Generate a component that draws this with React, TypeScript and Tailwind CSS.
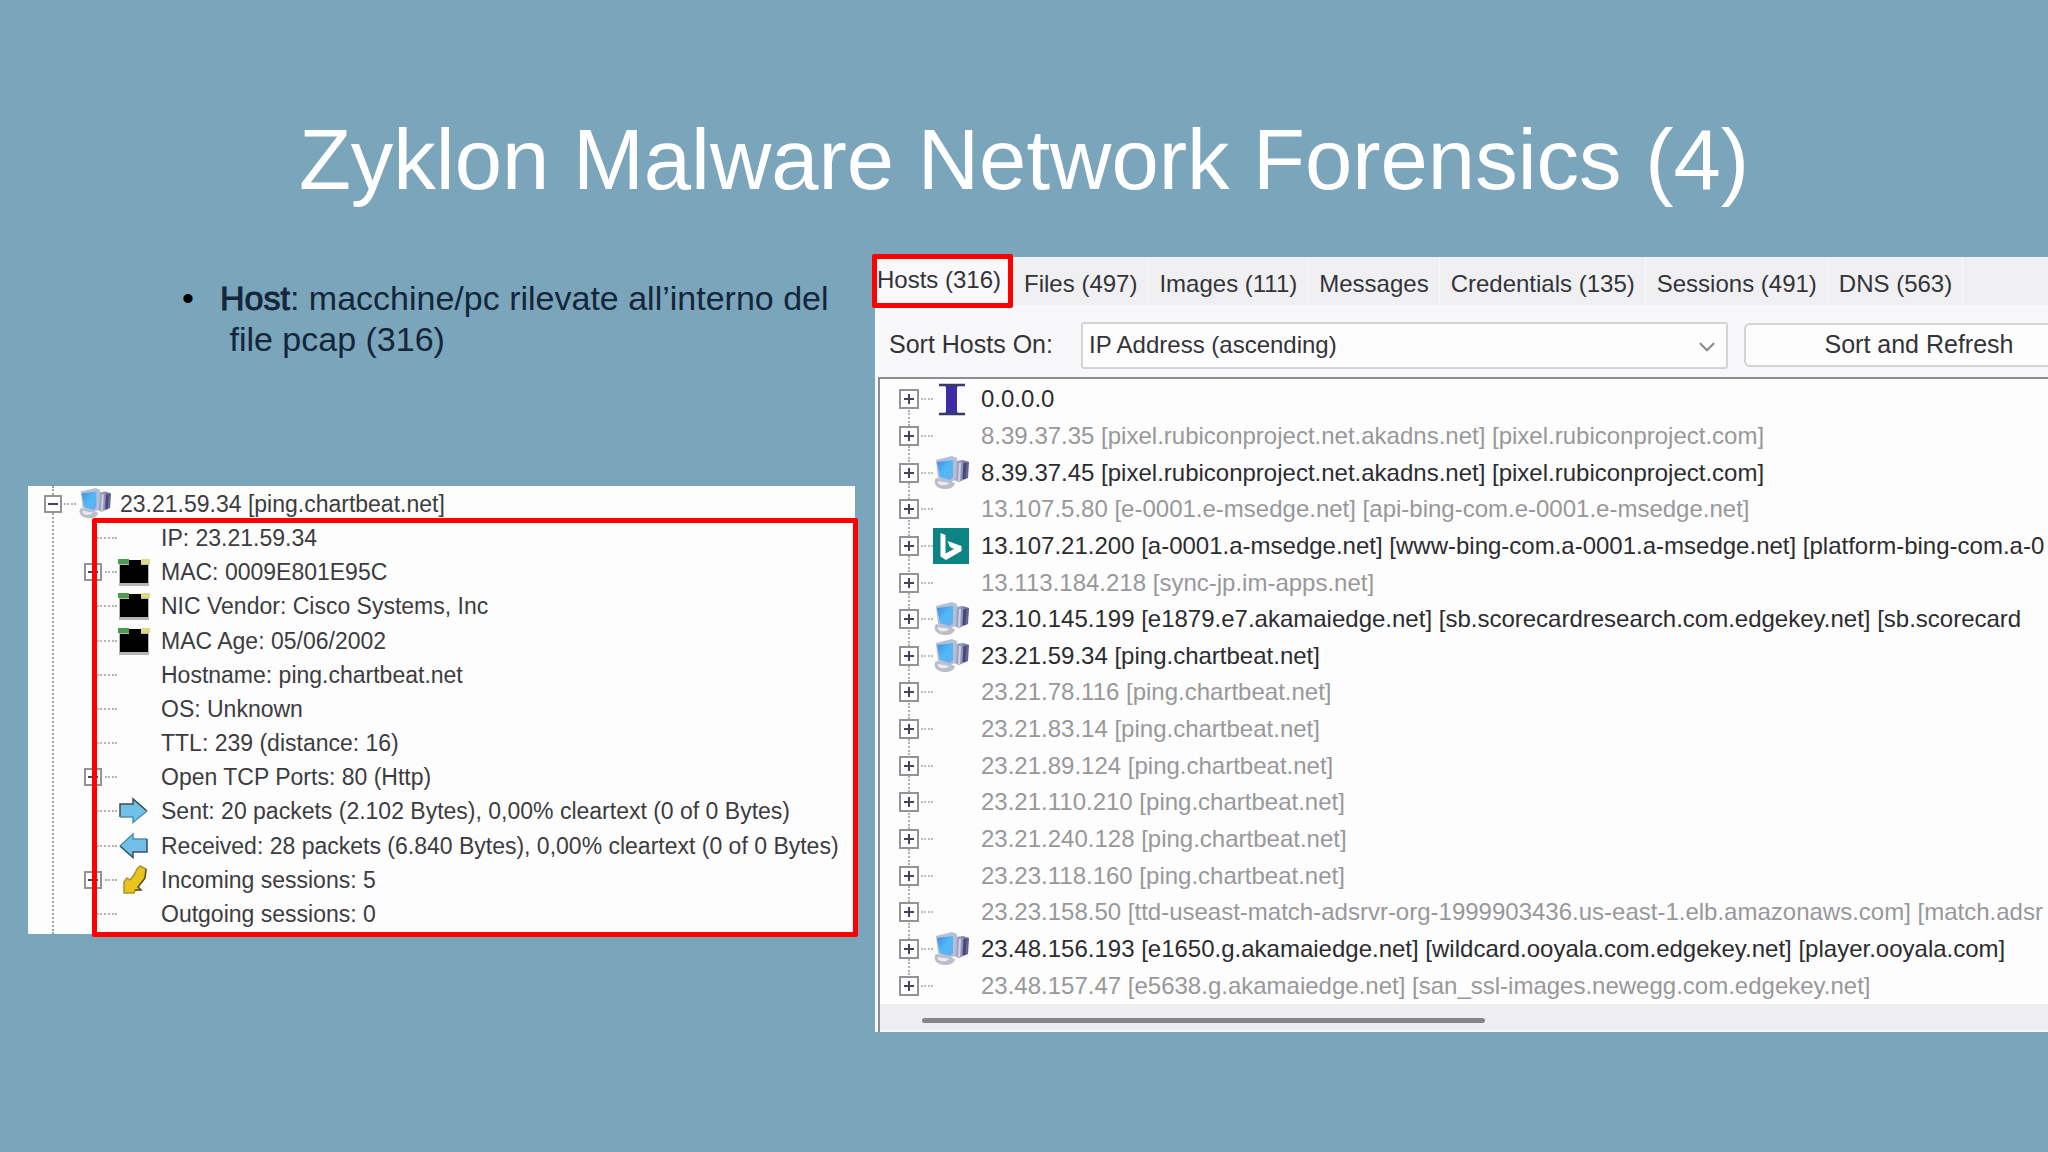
import React, { useState } from 'react';
import clsx from 'clsx';
import { ChevronDown } from 'lucide-react';

type IconName = 'computer' | 'bing' | 'unknown' | 'nic' | 'sent' | 'received' | 'incoming';

interface HostRow {
  label: string;
  icon?: IconName;
}

interface DetailRow {
  label: string;
  icon?: IconName;
  expandable?: boolean;
}

const TABS = [
  'Files (497)',
  'Images (111)',
  'Messages',
  'Credentials (135)',
  'Sessions (491)',
  'DNS (563)',
];

const HOSTS: HostRow[] = [
  { label: '0.0.0.0', icon: 'unknown' },
  { label: '8.39.37.35 [pixel.rubiconproject.net.akadns.net] [pixel.rubiconproject.com]' },
  { label: '8.39.37.45 [pixel.rubiconproject.net.akadns.net] [pixel.rubiconproject.com]', icon: 'computer' },
  { label: '13.107.5.80 [e-0001.e-msedge.net] [api-bing-com.e-0001.e-msedge.net]' },
  { label: '13.107.21.200 [a-0001.a-msedge.net] [www-bing-com.a-0001.a-msedge.net] [platform-bing-com.a-0', icon: 'bing' },
  { label: '13.113.184.218 [sync-jp.im-apps.net]' },
  { label: '23.10.145.199 [e1879.e7.akamaiedge.net] [sb.scorecardresearch.com.edgekey.net] [sb.scorecard', icon: 'computer' },
  { label: '23.21.59.34 [ping.chartbeat.net]', icon: 'computer' },
  { label: '23.21.78.116 [ping.chartbeat.net]' },
  { label: '23.21.83.14 [ping.chartbeat.net]' },
  { label: '23.21.89.124 [ping.chartbeat.net]' },
  { label: '23.21.110.210 [ping.chartbeat.net]' },
  { label: '23.21.240.128 [ping.chartbeat.net]' },
  { label: '23.23.118.160 [ping.chartbeat.net]' },
  { label: '23.23.158.50 [ttd-useast-match-adsrvr-org-1999903436.us-east-1.elb.amazonaws.com] [match.adsr' },
  { label: '23.48.156.193 [e1650.g.akamaiedge.net] [wildcard.ooyala.com.edgekey.net] [player.ooyala.com]', icon: 'computer' },
  { label: '23.48.157.47 [e5638.g.akamaiedge.net] [san_ssl-images.newegg.com.edgekey.net]' },
];

const DETAILS: DetailRow[] = [
  { label: 'IP: 23.21.59.34' },
  { label: 'MAC: 0009E801E95C', icon: 'nic', expandable: true },
  { label: 'NIC Vendor: Cisco Systems, Inc', icon: 'nic' },
  { label: 'MAC Age: 05/06/2002', icon: 'nic' },
  { label: 'Hostname: ping.chartbeat.net' },
  { label: 'OS: Unknown' },
  { label: 'TTL: 239 (distance: 16)' },
  { label: 'Open TCP Ports: 80 (Http)', expandable: true },
  { label: 'Sent: 20 packets (2.102 Bytes), 0,00% cleartext (0 of 0 Bytes)', icon: 'sent' },
  { label: 'Received: 28 packets (6.840 Bytes), 0,00% cleartext (0 of 0 Bytes)', icon: 'received' },
  { label: 'Incoming sessions: 5', icon: 'incoming', expandable: true },
  { label: 'Outgoing sessions: 0' },
];

const RowIcon: React.FC<{ name: IconName; className?: string }> = ({ name, className }) => {
  const cls = clsx('shrink-0', className);
  switch (name) {
    case 'computer':
      return (
        <svg viewBox="0 0 36 36" className={cls} aria-hidden="true">
          <defs>
            <linearGradient id="screen" x1="0" y1="0" x2="1" y2="1">
              <stop offset="0" stopColor="#4a86dc" />
              <stop offset="0.5" stopColor="#4fbaf8" />
              <stop offset="1" stopColor="#6fa8e8" />
            </linearGradient>
            <linearGradient id="tower" x1="0" y1="0" x2="1" y2="0">
              <stop offset="0" stopColor="#a9abc8" />
              <stop offset="0.5" stopColor="#9496bb" />
              <stop offset="1" stopColor="#5a5586" />
            </linearGradient>
          </defs>
          <path d="M3 23 C0 27 2 33 11 34 C18 34 21 32 22 28 L8 24 Z" fill="#bdbdc6" />
          <path d="M5 26 C4 30 9 31 13 30 L17 28 Z" fill="#ebebf0" />
          <path d="M22 6 L30 5 L36 7 L35 23 L26 27 L21 25 Z" fill="url(#tower)" />
          <path d="M27 8 L26 26" stroke="#cfd1e4" strokeWidth="2" />
          <path d="M32 8 L31 24" stroke="#4c4675" strokeWidth="3" />
          <path d="M3 5 L19 1 L24 3 L23 24 L17 28 L5 23 Z" fill="#b4c0d6" />
          <path d="M4 7 L20 5 L20 22 L17 25 L7 22 Z" fill="url(#screen)" />
        </svg>
      );
    case 'bing':
      return (
        <svg viewBox="0 0 36 36" className={cls} aria-hidden="true">
          <rect width="36" height="36" fill="#0c8484" />
          <path d="M7.500 5 L12.500 7 V25.500 L21 21 L17 19 L14.500 13 L28.500 18 V23 L13 32 L7.500 28.500 Z" fill="#fff" />
        </svg>
      );
    case 'unknown':
      return (
        <svg viewBox="0 0 36 36" className={cls} aria-hidden="true">
          <path d="M12 4 H25 L24 7 V30 L25 33 H12 L13 30 V7 Z" fill="#3b2da6" />
          <path d="M6 4 H32 M6 33 H32" stroke="#3a3a66" strokeWidth="2.500" />
        </svg>
      );
    case 'nic':
      return (
        <svg viewBox="0 0 32 32" className={cls} aria-hidden="true">
          <rect x="1" y="4" width="30" height="26" fill="#b4b6b4" />
          <path d="M2 9 H11 V4 H23 V9 H30 V27 H2 Z" fill="#000" />
          <rect x="0" y="3" width="11" height="5" fill="#4d9a52" />
          <rect x="23" y="3" width="9" height="5" fill="#d9dc84" />
        </svg>
      );
    case 'sent':
      return (
        <svg viewBox="0 0 32 32" className={cls} aria-hidden="true">
          <path d="M2 9 H15 V4 L29 16 L15 27.500 V22 H2 Z" fill="#71c0e8" />
          <path d="M2 22 V9 H15 V4 L29 16" fill="none" stroke="#3c4a50" strokeWidth="1.500" />
          <path d="M29 16 L15 27.500 V22 H2" fill="none" stroke="#4d8fb0" strokeWidth="1.500" />
        </svg>
      );
    case 'received':
      return (
        <svg viewBox="0 0 32 32" className={cls} aria-hidden="true">
          <path d="M29 9 H15 V4 L2 16 L15 27.500 V22 H29 Z" fill="#71c0e8" />
          <path d="M29 9 H15 V4 L2 16" fill="none" stroke="#4d8fb0" strokeWidth="1.500" />
          <path d="M2 16 L15 27.500 V22 H29 V9" fill="none" stroke="#33505f" strokeWidth="1.500" />
        </svg>
      );
    case 'incoming':
      return (
        <svg viewBox="0 0 32 32" className={cls} aria-hidden="true">
          <path d="M19 5 L22 2 L28 5 L27 14 L20 23 L23 26 L17 26 L16 29 L6 29 L6 18 L9 14 L12 16 L16 11 Z" fill="#e9c41f" stroke="#a8922f" strokeWidth="1.500" strokeLinejoin="round" />
          <path d="M28 5 L27 14 L20 23 L23 26 L17 26" fill="none" stroke="#5f5a2c" strokeWidth="1.500" />
        </svg>
      );
  }
};

interface ExpanderProps {
  open?: boolean;
  small?: boolean;
  label: string;
}

const Expander: React.FC<ExpanderProps> = ({ open, small, label }) => (
  <button
    type="button"
    aria-label={`${open ? 'Collapse' : 'Expand'} ${label}`}
    className={clsx(
      'relative flex shrink-0 items-center justify-center border-2 border-[#929297] bg-white',
      small ? 'size-[18px]' : 'size-5'
    )}
  >
    <span className="absolute h-[2px] w-[10px] bg-[#44445c]" />
    {!open && <span className="absolute h-[10px] w-[2px] bg-[#44445c]" />}
  </button>
);

const HostDetails = () => (
  <section className="relative bg-[#fdfdfd] pl-4 text-[23px] leading-[30px] text-[#3c3c40]">
    <div className="absolute inset-y-0 left-[24px] border-l-2 border-dotted border-[#a0a0a0]" />
    <div className="flex h-[35px] items-center">
      <Expander open small label="23.21.59.34" />
      <span className="ml-[2px] w-3 border-t-2 border-dotted border-[#b5b5b5]" />
      <RowIcon name="computer" className="ml-[2px] size-[33px]" />
      <span className="ml-[9px] whitespace-nowrap">23.21.59.34 [ping.chartbeat.net]</span>
    </div>
    <div className="relative">
      <ul className="grid min-h-[413px] auto-rows-fr pb-[3px]">
        {DETAILS.map((row) => (
          <li key={row.label} className="flex items-center pl-[40px]">
            <span className="flex w-[19px] shrink-0">
              {row.expandable && <Expander small label={row.label} />}
            </span>
            <span className={clsx('border-t-2 border-dotted border-[#b5b5b5]', row.expandable ? 'ml-[2px] w-[12px]' : '-ml-[6px] w-5')} />
            <span className="ml-[1px] flex w-[43px] shrink-0">
              {row.icon && <RowIcon name={row.icon} className="size-[32px]" />}
            </span>
            <span className="whitespace-nowrap">{row.label}</span>
          </li>
        ))}
      </ul>
      <div className="pointer-events-none absolute -top-[3px] -right-[3px] -bottom-[3px] left-[48px] rounded-[2px] border-[5px] border-[#fe0000]" />
    </div>
  </section>
);

const HostBrowser = () => {
  const [sort, setSort] = useState('ip-asc');

  return (
    <section className="bg-[#f8f7fa] text-[#333338]">
      <div role="tablist" className="flex h-12 items-center bg-[#f0f0f2] text-2xl whitespace-nowrap">
        <button
          type="button"
          role="tab"
          aria-selected="true"
          className="relative h-full shrink-0 bg-[#f9f8fb] pr-3 pb-[2px] pl-[2px]"
        >
          Hosts (316)
          <span className="absolute -top-[3px] right-0 -bottom-[3px] -left-[3px] rounded-[2px] border-[5px] border-[#fe0000]" />
        </button>
        {TABS.map((tab) => (
          <button
            type="button"
            role="tab"
            key={tab}
            aria-selected="false"
            className="h-full shrink-0 border-r border-[#f7f7f9] pt-[6px] pr-[10px] pl-[11px]"
          >
            {tab}
          </button>
        ))}
      </div>

      <div className="flex h-[72px] items-center pt-[8px] pl-[14px] text-[25px] whitespace-nowrap">
        <label htmlFor="sort-hosts" className="w-[192px] shrink-0">Sort Hosts On:</label>
        <div className="relative w-[647px] shrink-0">
          <select
            id="sort-hosts"
            value={sort}
            onChange={(e) => setSort(e.target.value)}
            className="h-[47px] w-full appearance-none rounded-[3px] border-2 border-[#d3d3d5] bg-[#fdfdfd] pl-[6px] text-2xl"
          >
            <option value="ip-asc">IP Address (ascending)</option>
          </select>
          <ChevronDown size={26} strokeWidth={2} className="pointer-events-none absolute top-[12px] right-[8px] text-[#8b8b8b]" />
        </div>
        <button type="button" className="ml-4 h-[44px] w-[350px] shrink-0 rounded-md border-2 border-[#d3d3d5] bg-[#fdfdfd]">
          Sort and Refresh
        </button>
      </div>

      <div className="ml-[3px] border-t-2 border-l-2 border-[#8d8d91] bg-[#fdfdfd]">
        <ul className="grid min-h-[625px] auto-rows-fr overflow-hidden pt-[2px] pl-[19px] text-2xl">
          {HOSTS.map((host, index) => (
            <li key={host.label} className="relative flex items-center whitespace-nowrap">
              {index > 0 && (
                <span className="absolute -top-[8px] left-[9px] h-4 border-l-2 border-dotted border-[#b0b0b0]" />
              )}
              <Expander label={host.label} />
              <span className="ml-[2px] w-3 shrink-0 border-t-2 border-dotted border-[#c0c0c0]" />
              <span className="flex w-12 shrink-0">
                {host.icon && <RowIcon name={host.icon} className="size-9" />}
              </span>
              <span className={host.icon ? 'text-[#2c2c30]' : 'text-[#98989a]'}>{host.label}</span>
            </li>
          ))}
        </ul>
        <div className="flex h-[28px] items-center border-b-2 border-[#f8f8fa] bg-[#efeff1] pt-[9px] pb-[3px] pl-[42px]">
          <div className="h-[5px] w-1/2 rounded-sm bg-[#858587]" />
        </div>
      </div>
    </section>
  );
};

export default function App() {
  return (
    <main
      className="min-h-screen overflow-hidden bg-[#7aa5bb] pt-[112px]"
      style={{ fontFamily: '"Liberation Sans", Arial, sans-serif' }}
    >
      <h1 className="text-center text-[85px] leading-[96px] text-white">
        Zyklon Malware Network Forensics (4)
      </h1>

      <div className="mt-[49px] grid grid-cols-[minmax(0,875fr)_minmax(0,1173fr)] items-start">
        <div className="pt-[21px] pr-5 pl-7">
          <ul className="pl-[154px] text-[34px] leading-[41px] text-[#14263a]">
            <li className="flex whitespace-nowrap">
              <span className="w-[38px] shrink-0 text-black">•</span>
              <p>
                <span className="[-webkit-text-stroke:1px_#14263a]">Host</span>: macchine/pc rilevate all’interno del
                <br />
                &nbsp;file pcap (316)
              </p>
            </li>
          </ul>
          <div className="mt-[126px]">
            <HostDetails />
          </div>
        </div>
        <HostBrowser />
      </div>
    </main>
  );
}
